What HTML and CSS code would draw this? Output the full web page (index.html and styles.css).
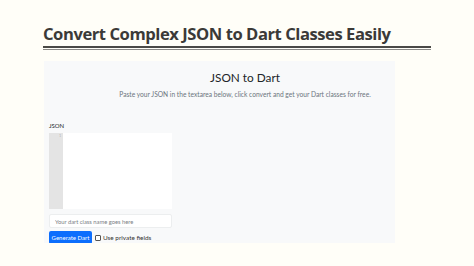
FILE: index.html
```html
<!DOCTYPE html>
<html lang="en">
<head>
    <meta charset="UTF-8">
    <meta name="viewport" content="width=device-width, initial-scale=1.0">
    <title>JSON to Dart</title>
    <link rel="stylesheet" href="styles.css">
</head>
<body>
    <div class="page">
        <h1 class="title">Convert Complex JSON to Dart Classes Easily</h1>
        <div class="rule"></div>
        <div class="panel">
            <div class="intro">
                <h2>JSON to Dart</h2>
                <p>Paste your JSON in the textarea below, click convert and get your Dart classes for free.</p>
            </div>
            <label class="field-label">JSON</label>
            <div class="editor">
                <div class="gutter"><span>1</span></div>
                <div class="code"></div>
            </div>
            <input type="text" class="class-name" placeholder="Your dart class name goes here">
            <div class="actions">
                <button class="btn">Generate Dart</button>
                <label class="check"><span class="box"></span>Use private fields</label>
            </div>
        </div>
    </div>
</body>
</html>
```

FILE: styles.css
```css
body {
    margin: 0;
    background-color: #fffef8;
    font-family: 'Lato', 'Noto Sans', sans-serif;
    color: #212529;
}
.page {
    padding: 23px 43px 0 43px;
}
.title {
    font-family: 'Open Sans', sans-serif;
    font-weight: 700;
    font-size: 16.6px;
    letter-spacing: -0.45px;
    color: #3b3a38;
    margin: 0;
    line-height: 22px;
    white-space: nowrap;
}
.rule {
    height: 1px;
    border-top: 2px solid #4a4947;
    border-bottom: 1px solid #8a8987;
    margin-top: 1px;
}
.panel {
    width: 341px;
    margin: 11px 0 0 1px;
    background: #f8f9fa;
    padding: 7px 5px 0 5px;
    height: 175px;
}
.intro {
    text-align: center;
    padding-left: 51px;
}
.intro h2 {
    font-size: 11.8px;
    font-weight: 400;
    margin: 0;
    line-height: 20px;
    color: #212529;
}
.intro p {
    font-size: 6.65px;
    color: #6c757d;
    margin: 2px 0 0 0;
    line-height: 9px;
}
.field-label {
    display: block;
    font-size: 6px;
    margin-top: 22px;
    line-height: 9px;
}
.editor {
    display: flex;
    width: 123px;
    height: 76px;
    margin-top: 3px;
    background: #fff;
}
.gutter {
    width: 14px;
    background: #e4e4e4;
    font-size: 3px;
    color: #aaa;
    text-align: right;
    padding-top: 1px;
}
.gutter span {
    padding-right: 2px;
}
.code {
    flex: 1;
}
.class-name {
    display: block;
    box-sizing: border-box;
    width: 123px;
    height: 14px;
    margin-top: 5px;
    border: 1px solid #eceeef;
    border-radius: 2px;
    padding: 0 5px;
    font-family: inherit;
    font-size: 5.8px;
    background: #fff;
}
.class-name::placeholder {
    color: #7a8085;
}
.actions {
    display: flex;
    align-items: center;
    margin-top: 3px;
}
.btn {
    background: #0d6efd;
    color: #fff;
    border: none;
    border-radius: 2px;
    font-family: inherit;
    font-size: 6px;
    height: 13px;
    width: 43px;
    padding: 0;
}
.check {
    font-size: 6.4px;
    color: #333;
    margin-left: 3px;
    display: flex;
    align-items: center;
}
.box {
    width: 4px;
    height: 4px;
    border: 0.7px solid #555;
    border-radius: 1px;
    margin-right: 2px;
    background: #fff;
}
```
